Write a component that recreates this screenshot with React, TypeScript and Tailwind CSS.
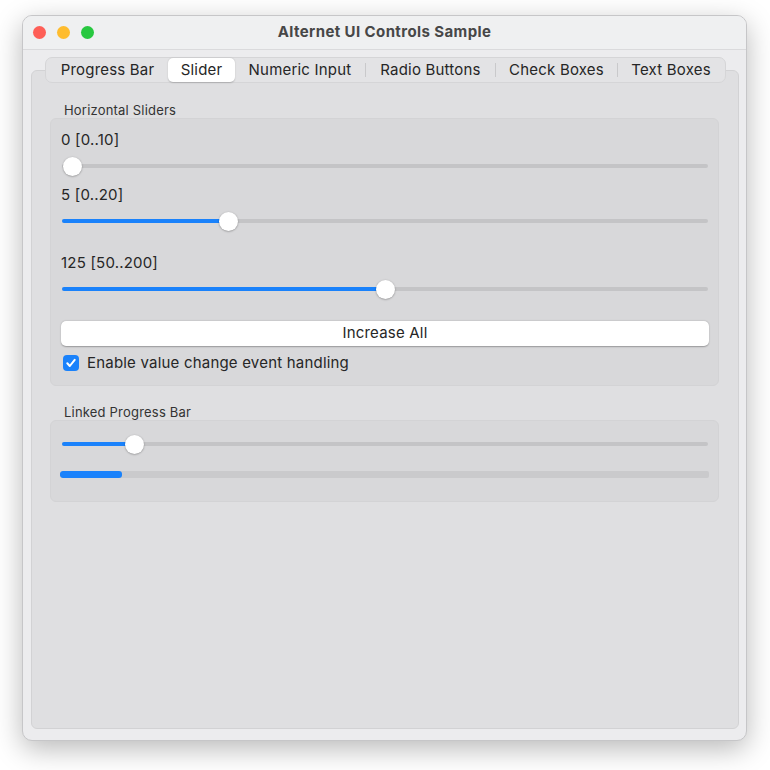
import React from "react";

const BLUE = "#1a82fb";

function Slider({ value, min, max }: { value: number; min: number; max: number }) {
  const frac = (value - min) / (max - min);
  const pos = `calc(10px + (100% - 20px) * ${frac})`;
  return (
    <div className="relative h-[20px] mx-px flex items-center">
      <div className="w-full h-[4px] rounded-full bg-[#c4c4c6]" />
      <div className="absolute left-0 top-[8px] h-[4px] rounded-full" style={{ width: pos, backgroundColor: frac > 0 ? BLUE : "transparent" }} />
      <div
        className="absolute top-[0.5px] w-[19px] h-[19px] -ml-[9.5px] rounded-full bg-white shadow-[0_0.5px_2px_rgba(0,0,0,0.35)]"
        style={{ left: pos }}
      />
    </div>
  );
}

const tabs: { label: string; w: string; sel?: boolean; sep?: boolean }[] = [
  { label: "Progress Bar", w: "w-[121px]" },
  { label: "Slider", w: "w-[67px]", sel: true },
  { label: "Numeric Input", w: "w-[130px]" },
  { label: "Radio Buttons", w: "w-[129px]", sep: true },
  { label: "Check Boxes", w: "w-[121px]", sep: true },
  { label: "Text Boxes", w: "w-[106px]", sep: true },
];

export default function App() {
  return (
    <div
      className="w-[770px] h-[770px] bg-white pt-[15px] pl-[22px] text-[#262626] tracking-[0.2px]"
      style={{ fontFamily: "Inter, 'Noto Sans', sans-serif" }}
    >
      <div className="w-[725px] h-[726px] rounded-[10px] bg-[#ececee] border border-[#c6c6c8] shadow-[0_8px_28px_rgba(0,0,0,0.28)] overflow-hidden flex flex-col">
        {/* title bar */}
        <div className="h-[34px] shrink-0 bg-[#eff0f1] border-b border-[#dadadc] grid grid-cols-[1fr_auto_1fr] items-center">
          <div className="flex items-center gap-[11px] pl-[10px]">
            <div className="w-[13px] h-[13px] rounded-full bg-[#fe5f57]" />
            <div className="w-[13px] h-[13px] rounded-full bg-[#febc2e]" />
            <div className="w-[13px] h-[13px] rounded-full bg-[#28c840]" />
          </div>
          <div className="text-[15px] font-bold text-[#474747] tracking-[0.4px]">Alternet UI Controls Sample</div>
          <div />
        </div>
        {/* body */}
        <div className="flex-1 flex flex-col pt-[7px] pl-[8px] pr-[7px] pb-[11px]">
          <div className="relative z-10 self-center ml-[1px] flex items-center h-[26px] p-px rounded-[7px] bg-[#e3e3e5] border border-[#d5d5d7]">
            {tabs.map((t) => (
              <React.Fragment key={t.label}>
                {t.sep && <div className="w-px h-[14px] bg-[#c9c9cb]" />}
                <div
                  className={`${t.w} h-[24px] flex items-center justify-center text-[15px] rounded-[5px] ${
                    t.sel ? "bg-white shadow-[0_0.5px_1.5px_rgba(0,0,0,0.2)]" : ""
                  }`}
                >
                  {t.label}
                </div>
              </React.Fragment>
            ))}
          </div>
          <div className="flex-1 -mt-[13px] rounded-[6px] bg-[#dfdfe1] border border-[#d2d2d4] pt-[31px] pl-[18px] pr-[19px]">
            <div className="text-[13px] leading-[16px] pl-[14px] text-[#333]">Horizontal Sliders</div>
            <div className="rounded-[6px] bg-[#d8d8da] border border-[#d3d3d5] pt-[12px] pb-[13px] pl-[10px] pr-[9px] flex flex-col">
              <div className="text-[15px] leading-[18px]">0 [0..10]</div>
              <div className="mt-[7px]"><Slider value={0} min={0} max={10} /></div>
              <div className="text-[15px] leading-[18px] mt-[10px]">5 [0..20]</div>
              <div className="mt-[7px]"><Slider value={5} min={0} max={20} /></div>
              <div className="text-[15px] leading-[18px] mt-[23px]">125 [50..200]</div>
              <div className="mt-[7px]"><Slider value={125} min={50} max={200} /></div>
              <div className="mt-[22px] h-[25px] rounded-[5px] bg-white shadow-[0_0.5px_1.5px_rgba(0,0,0,0.3)] flex items-center justify-center text-[15px]">
                Increase All
              </div>
              <div className="mt-[8px] h-[18px] flex items-center gap-[8px] pl-[2px]">
                <div className="w-[16px] h-[16px] rounded-[4px] flex items-center justify-center" style={{ backgroundColor: BLUE }}>
                  <svg width="12" height="12" viewBox="0 0 12 12" fill="none">
                    <path d="M2.3 6.3 L4.8 9 L9.7 2.8" stroke="white" strokeWidth="2" strokeLinecap="round" strokeLinejoin="round" />
                  </svg>
                </div>
                <div className="text-[15px]">Enable value change event handling</div>
              </div>
            </div>
            <div className="text-[13px] leading-[16px] pl-[14px] mt-[18px] text-[#333]">Linked Progress Bar</div>
            <div className="rounded-[6px] bg-[#d8d8da] border border-[#d3d3d5] pt-[13px] pb-[23px] pl-[10px] pr-[9px] flex flex-col">
              <Slider value={10} min={0} max={100} />
              <div className="mt-[17px] h-[7px] -ml-[1px] bg-[#cacacc] rounded-[2px] overflow-hidden">
                <div className="h-full rounded-[3px]" style={{ width: "9.6%", backgroundColor: BLUE }} />
              </div>
            </div>
          </div>
        </div>
      </div>
    </div>
  );
}
